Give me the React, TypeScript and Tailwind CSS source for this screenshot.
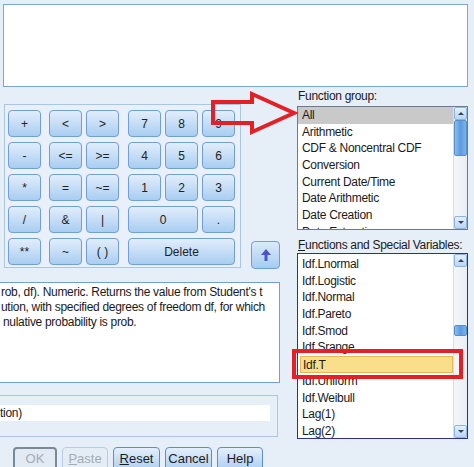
import React from 'react'

const KEY =
  'flex h-[27px] items-center justify-center rounded-[4px] border border-[#6f9fd3] bg-linear-to-b from-[#e2eefb] to-[#a9cdf1] text-[12px] text-[#222]'

function Key({ label, w = 'w-[33px]', ml = '' }: { label: string; w?: string; ml?: string }) {
  return <div className={`${KEY} ${w} ${ml}`}>{label}</div>
}

const rows: { label: string; w?: string; ml: string }[][] = [
  [
    { label: '+', ml: 'ml-[3px]' },
    { label: '<', ml: 'ml-[8px]' },
    { label: '>', ml: 'ml-[4px]' },
    { label: '7', ml: 'ml-[9px]' },
    { label: '8', ml: 'ml-[4px]' },
    { label: '9', ml: 'ml-[4px]' },
  ],
  [
    { label: '-', ml: 'ml-[3px]' },
    { label: '<=', ml: 'ml-[8px]' },
    { label: '>=', ml: 'ml-[4px]' },
    { label: '4', ml: 'ml-[9px]' },
    { label: '5', ml: 'ml-[4px]' },
    { label: '6', ml: 'ml-[4px]' },
  ],
  [
    { label: '*', ml: 'ml-[3px]' },
    { label: '=', ml: 'ml-[8px]' },
    { label: '~=', ml: 'ml-[4px]' },
    { label: '1', ml: 'ml-[9px]' },
    { label: '2', ml: 'ml-[4px]' },
    { label: '3', ml: 'ml-[4px]' },
  ],
  [
    { label: '/', ml: 'ml-[3px]' },
    { label: '&', ml: 'ml-[8px]' },
    { label: '|', ml: 'ml-[4px]' },
    { label: '0', w: 'w-[70px]', ml: 'ml-[9px]' },
    { label: '.', ml: 'ml-[4px]' },
  ],
  [
    { label: '**', ml: 'ml-[3px]' },
    { label: '~', ml: 'ml-[8px]' },
    { label: '( )', ml: 'ml-[4px]' },
    { label: 'Delete', w: 'w-[107px]', ml: 'ml-[9px]' },
  ],
]

function Scrollbar({ thumbTop, thumbH }: { thumbTop: string; thumbH: string }) {
  return (
    <div className="relative flex w-[14px] shrink-0 flex-col border-l border-[#d6dde8] bg-linear-to-r from-[#f4f6fa] to-[#e9edf3]">
      <div className="flex h-[13px] items-center justify-center rounded-[2px] border border-[#8db5e2] bg-linear-to-b from-[#e6f0fb] to-[#b9d5f2]">
        <div className="h-0 w-0 border-x-[3px] border-b-[3px] border-x-transparent border-b-[#33445a]" />
      </div>
      <div className={`${thumbTop} ${thumbH} rounded-[2px] border border-[#5a8fcb] bg-linear-to-r from-[#8cbbea] via-[#5a9ae0] to-[#7fb2e6]`} />
      <div className="flex-1" />
      <div className="flex h-[13px] items-center justify-center rounded-[2px] border border-[#8db5e2] bg-linear-to-b from-[#e6f0fb] to-[#b9d5f2]">
        <div className="h-0 w-0 border-x-[3px] border-t-[3px] border-x-transparent border-t-[#33445a]" />
      </div>
    </div>
  )
}

const groups = ['All', 'Arithmetic', 'CDF & Noncentral CDF', 'Conversion', 'Current Date/Time', 'Date Arithmetic', 'Date Creation', 'Date Extraction']
const funcs = ['Idf.Lnormal', 'Idf.Logistic', 'Idf.Normal', 'Idf.Pareto', 'Idf.Smod', 'Idf.Srange', 'Idf.T', 'Idf.Uniform', 'Idf.Weibull', 'Lag(1)', 'Lag(2)']

function Btn({ children, kind = 'on' }: { children: React.ReactNode; kind?: 'on' | 'off' | 'def' }) {
  const look =
    kind === 'on'
      ? 'border-[#5b8fc9] bg-linear-to-b from-[#e4effb] to-[#a8cbf0] text-[#1c1c1c]'
      : kind === 'def'
        ? 'border-[#7b8896] border-2 bg-[#e2eaf3] text-[#a3acb6]'
        : 'border-[#b9cde2] bg-[#e4ecf5] text-[#a3acb6]'
  return (
    <div className={`flex h-[26px] items-center justify-center rounded-[4px] border pb-[3px] text-[13px] ${look}`}>{children}</div>
  )
}

export default function App() {
  return (
    <div className="relative h-[467px] w-[474px] overflow-hidden bg-[#e6eef8] font-['Liberation_Sans',Arial,sans-serif] text-[12px] tracking-[-0.3px] text-[#1a1a1a]">
      <div className="ml-[3px] mt-[4px] h-[83px] w-[465px] border border-[#7aa5d8] bg-white" />

      <div className="flex">
        {/* left column */}
        <div className="w-[297px] shrink-0">
          <div className="ml-[4px] mt-[17px] flex items-end tracking-normal">
            <div className="flex h-[164px] w-[237px] flex-col gap-[5px] border border-[#aac6e3] bg-[#e9f0f9] pt-[5px]">
              {rows.map((r, i) => (
                <div key={i} className="flex">
                  {r.map((k) => (
                    <Key key={k.label} label={k.label} w={k.w} ml={k.ml} />
                  ))}
                </div>
              ))}
            </div>
            <div className="mb-[-1px] ml-[10px] flex h-[28px] w-[29px] items-center justify-center rounded-[4px] border border-[#6f9fd3] bg-linear-to-b from-[#dcebfa] to-[#a6cbf0]">
              <svg width="12" height="14" viewBox="0 0 12 14">
                <path d="M6 1 L11 7 L7.5 7 L7.5 13 L4.5 13 L4.5 7 L1 7 Z" fill="#4a55c8" />
              </svg>
            </div>
          </div>

          <div className="-ml-[2px] mt-[14px] h-[101px] w-[282px] border border-[#6f9fd3] bg-white pl-[2px] pt-[2px] leading-[15px] whitespace-nowrap">
            <div>rob, df). Numeric. Returns the value from Student's t</div>
            <div>ution, with specified degrees of freedom df, for which</div>
            <div className="pl-[2px]">nulative probability is prob.</div>
          </div>

          <div className="-ml-[2px] mt-[12px] h-[42px] w-[280px] border border-[#aac6e3] pt-[9px]">
            <div className="h-[16px] w-[271px] bg-white pl-[1px] leading-[16px]">tion)</div>
          </div>

          <div className="ml-[13px] mt-[10px] grid grid-cols-[44px_46px_47px_47px_46px] gap-x-[5px] tracking-normal">
            <Btn kind="def">OK</Btn>
            <Btn kind="off">
              <span className="underline">P</span>aste
            </Btn>
            <Btn>
              <span className="underline">R</span>eset
            </Btn>
            <Btn>Cancel</Btn>
            <Btn>Help</Btn>
          </div>
        </div>

        {/* right column */}
        <div className="w-[171px] shrink-0">
          <div className="ml-[1px] mt-[2px] h-[14px] leading-[14px]">
            Function <span className="underline">g</span>roup:
          </div>
          <div className="mt-[3px] flex h-[124px] border border-[#6d7891] bg-white">
            <div className="flex-1 overflow-hidden">
              {groups.map((g, i) => (
                <div
                  key={g}
                  className={`h-[16.7px] pl-[4px] leading-[16.7px] whitespace-nowrap ${i === 0 ? 'bg-[#c9c9c9]' : ''}`}
                >
                  {g}
                </div>
              ))}
            </div>
            <Scrollbar thumbTop="mt-0" thumbH="h-[36px]" />
          </div>

          <div className="ml-[1px] mt-[8px] h-[14px] leading-[14px] whitespace-nowrap">
            <span className="underline">F</span>unctions and Special Variables:
          </div>
          <div className="mt-[1px] flex h-[186px] border border-[#2c3190] bg-white">
            <div className="flex-1 overflow-hidden pt-[2px]">
              {funcs.map((f) => (
                <div
                  key={f}
                  className={`ml-[2px] h-[16.7px] pl-[2px] leading-[16.7px] whitespace-nowrap ${f === 'Idf.T' ? 'border border-[#e2b85a] bg-[#f9df8c] leading-[14.7px]' : ''}`}
                >
                  {f}
                </div>
              ))}
            </div>
            <Scrollbar thumbTop="mt-[58px]" thumbH="h-[11px]" />
          </div>
        </div>
      </div>

      {/* annotations */}
      <svg className="pointer-events-none absolute left-0 top-0" width="474" height="467">
        <polygon
          points="213,102 252,102 252,94 294,113 252,132 252,123 213,123"
          fill="none"
          stroke="#e51f26"
          strokeWidth="4"
          strokeLinejoin="miter"
        />
      </svg>
      <div className="pointer-events-none absolute left-[292px] top-[349px] h-[30px] w-[171px] border-[4px] border-[#e51f26]" />
    </div>
  )
}
